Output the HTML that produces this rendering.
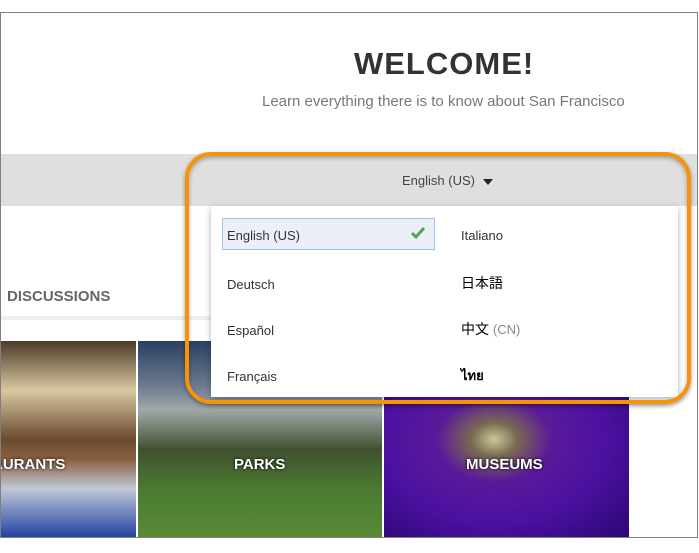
<!DOCTYPE html>
<html><head><meta charset="utf-8"><style>
*{margin:0;padding:0;box-sizing:border-box}
body{width:699px;height:553px;background:#fff;position:relative;overflow:hidden;font-family:"Liberation Sans","Noto Sans CJK JP",sans-serif}
.frame{position:absolute;left:0;top:12px;width:698px;height:526px;border:1px solid #808080;overflow:hidden}
.abs{position:absolute}
h1{position:absolute;left:353px;top:33px;font-size:31px;font-weight:bold;color:#333;letter-spacing:1px}
.sub{left:261px;top:80px;font-size:15px;color:#777}
.bar{left:-1px;top:141px;width:698px;height:52px;background:#dfdfdf}
.sel{left:401px;top:160px;font-size:13px;color:#444}
.tri{left:482px;top:166px;width:0;height:0;border-left:5px solid transparent;border-right:5px solid transparent;border-top:6px solid #222}
.disc{left:6px;top:275px;font-size:15px;font-weight:bold;color:#666}
.line{left:-1px;top:303px;width:212px;height:4px;background:#eee}
.img{top:328px;height:197px;overflow:hidden}
.lbl{position:absolute;top:115px;font-size:15px;font-weight:bold;color:#fff;text-shadow:0 0 3px #000}
.panel{left:210px;top:193px;width:467px;height:191px;background:#fff;box-shadow:0 2px 6px rgba(0,0,0,.3)}
.it{position:absolute;font-size:13px;color:#333}
.chk{position:absolute;left:11px;top:12px;width:213px;height:32px;background:#ebf0f8;border:1px solid #9ec3f0}
.orange{position:absolute;left:185px;top:152px;width:506px;height:252px;border:4px solid #f7930b;border-radius:26px;box-shadow:0 2px 4px rgba(0,0,0,.4), inset 0 2px 4px rgba(0,0,0,.3)}
</style></head><body>
<div class="frame">
<h1>WELCOME!</h1>
<div class="abs sub">Learn everything there is to know about San Francisco</div>
<div class="abs bar"></div>
<div class="abs sel">English (US)</div>
<div class="abs tri"></div>
<div class="abs disc">DISCUSSIONS</div>
<div class="abs line"></div>
<div class="abs img" style="left:-1px;width:136px;background:linear-gradient(#4a3a2a 0%,#d8c8a0 25%,#6a4a30 50%,#8a6040 60%,#c0c8d8 75%,#2040a0 100%)"><div class="lbl" style="left:-8px">AURANTS</div></div>
<div class="abs img" style="left:137px;width:244px;background:linear-gradient(#2a4060 0%,#6a7890 22%,#a0a8a8 35%,#405030 55%,#4a7a30 75%,#5a8a38 100%)"><div class="lbl" style="left:96px">PARKS</div></div>
<div class="abs img" style="left:383px;width:245px;background:radial-gradient(ellipse at 45% 50%,#c8c898 0,#7a6a50 12%,#5a1a9a 30%,#4a10a0 60%,#2a0870 100%)"><div class="lbl" style="left:82px">MUSEUMS</div></div>
<div class="abs panel">
<div class="chk"></div>
<div class="it" style="left:16px;top:22px">English (US)</div>
<svg style="position:absolute;left:199px;top:20px" width="16" height="14" viewBox="0 0 16 14"><path d="M2 7l4 4 8-9" stroke="#5aa05a" stroke-width="3" fill="none"/></svg>
<div class="it" style="left:16px;top:71px">Deutsch</div>
<div class="it" style="left:16px;top:117px">Español</div>
<div class="it" style="left:16px;top:163px">Français</div>
<div class="it" style="left:250px;top:22px">Italiano</div>
<div class="it" style="left:250px;top:67px;color:#000;font-size:14px">日本語</div>
<div class="it" style="left:250px;top:113px;color:#000;font-size:14px">中文 <span style="color:#888;font-size:13px">(CN)</span></div>
<div class="it" style="left:250px;top:159px;color:#000;font-weight:bold">ไทย</div>
</div>
</div>
<div class="orange"></div>
</body></html>
